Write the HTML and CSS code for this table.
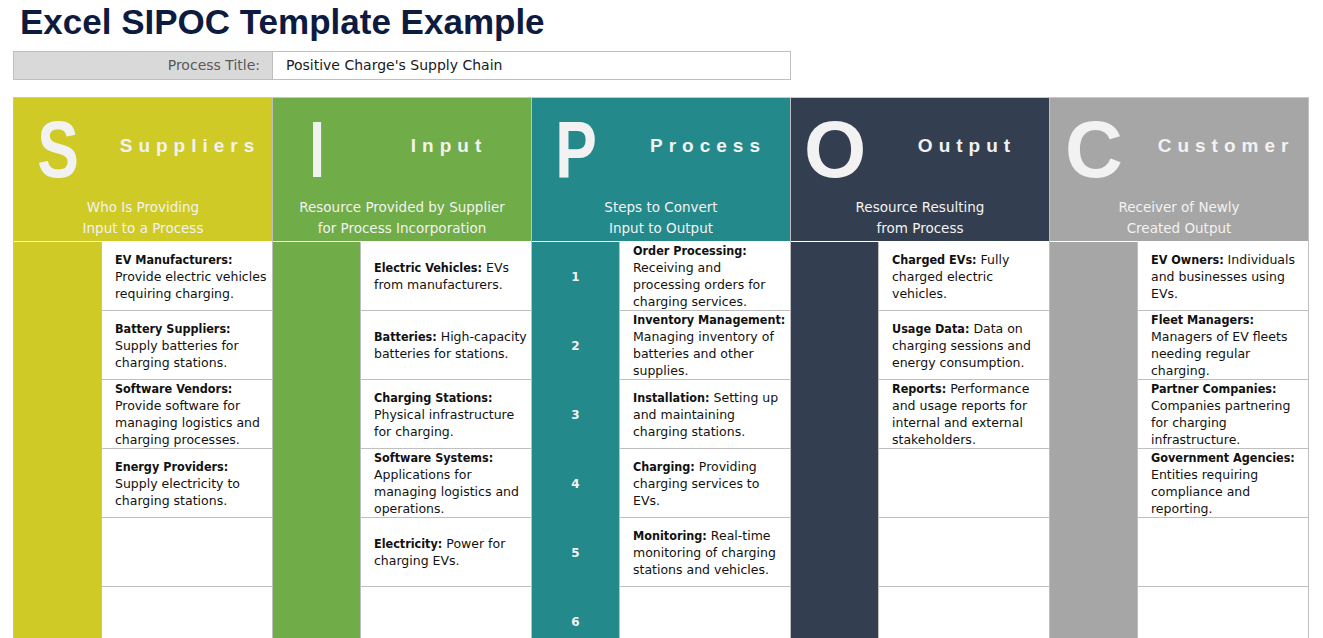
FILE: index.html
```html
<!DOCTYPE html>
<html lang="en">
<head>
<meta charset="utf-8">
<title>Excel SIPOC Template Example</title>
<link rel="stylesheet" href="styles.css">
</head>
<body>
<div class="page">
  <h1 class="title">Excel SIPOC Template Example</h1>
  <div class="ptitle">
    <div class="ptitle-label">Process Title:</div>
    <div class="ptitle-value">Positive Charge's Supply Chain</div>
  </div>

  <div class="sipoc">
    <!-- Suppliers -->
    <div class="col col-s">
      <div class="hd">
        <div class="hd-top">
          <div class="hd-letter">S</div>
          <div class="hd-name">Suppliers</div>
        </div>
        <div class="hd-sub">Who Is Providing<br>Input to a Process</div>
      </div>
      <div class="rows">
        <div class="row"><div class="strip"></div><div class="cell"><p><b>EV Manufacturers:</b><br>Provide electric vehicles<br>requiring charging.</p></div></div>
        <div class="row"><div class="strip"></div><div class="cell"><p><b>Battery Suppliers:</b><br>Supply batteries for<br>charging stations.</p></div></div>
        <div class="row"><div class="strip"></div><div class="cell"><p><b>Software Vendors:</b><br>Provide software for<br>managing logistics and<br>charging processes.</p></div></div>
        <div class="row"><div class="strip"></div><div class="cell"><p><b>Energy Providers:</b><br>Supply electricity to<br>charging stations.</p></div></div>
        <div class="row"><div class="strip"></div><div class="cell"></div></div>
        <div class="row"><div class="strip"></div><div class="cell"></div></div>
      </div>
    </div>

    <!-- Input -->
    <div class="col col-i">
      <div class="hd">
        <div class="hd-top">
          <div class="hd-letter">I</div>
          <div class="hd-name">Input</div>
        </div>
        <div class="hd-sub">Resource Provided by Supplier<br>for Process Incorporation</div>
      </div>
      <div class="rows">
        <div class="row"><div class="strip"></div><div class="cell"><p><b>Electric Vehicles:</b> EVs<br>from manufacturers.</p></div></div>
        <div class="row"><div class="strip"></div><div class="cell"><p><b>Batteries:</b> High-capacity<br>batteries for stations.</p></div></div>
        <div class="row"><div class="strip"></div><div class="cell"><p><b>Charging Stations:</b><br>Physical infrastructure<br>for charging.</p></div></div>
        <div class="row"><div class="strip"></div><div class="cell"><p><b>Software Systems:</b><br>Applications for<br>managing logistics and<br>operations.</p></div></div>
        <div class="row"><div class="strip"></div><div class="cell"><p><b>Electricity:</b> Power for<br>charging EVs.</p></div></div>
        <div class="row"><div class="strip"></div><div class="cell"></div></div>
      </div>
    </div>

    <!-- Process -->
    <div class="col col-p">
      <div class="hd">
        <div class="hd-top">
          <div class="hd-letter">P</div>
          <div class="hd-name">Process</div>
        </div>
        <div class="hd-sub">Steps to Convert<br>Input to Output</div>
      </div>
      <div class="rows">
        <div class="row"><div class="strip">1</div><div class="cell"><p><b>Order Processing:</b><br>Receiving and<br>processing orders for<br>charging services.</p></div></div>
        <div class="row"><div class="strip">2</div><div class="cell"><p><b>Inventory Management:</b><br>Managing inventory of<br>batteries and other<br>supplies.</p></div></div>
        <div class="row"><div class="strip">3</div><div class="cell"><p><b>Installation:</b> Setting up<br>and maintaining<br>charging stations.</p></div></div>
        <div class="row"><div class="strip">4</div><div class="cell"><p><b>Charging:</b> Providing<br>charging services to<br>EVs.</p></div></div>
        <div class="row"><div class="strip">5</div><div class="cell"><p><b>Monitoring:</b> Real-time<br>monitoring of charging<br>stations and vehicles.</p></div></div>
        <div class="row"><div class="strip">6</div><div class="cell"></div></div>
      </div>
    </div>

    <!-- Output -->
    <div class="col col-o">
      <div class="hd">
        <div class="hd-top">
          <div class="hd-letter">O</div>
          <div class="hd-name">Output</div>
        </div>
        <div class="hd-sub">Resource Resulting<br>from Process</div>
      </div>
      <div class="rows">
        <div class="row"><div class="strip"></div><div class="cell"><p><b>Charged EVs:</b> Fully<br>charged electric<br>vehicles.</p></div></div>
        <div class="row"><div class="strip"></div><div class="cell"><p><b>Usage Data:</b> Data on<br>charging sessions and<br>energy consumption.</p></div></div>
        <div class="row"><div class="strip"></div><div class="cell"><p><b>Reports:</b> Performance<br>and usage reports for<br>internal and external<br>stakeholders.</p></div></div>
        <div class="row"><div class="strip"></div><div class="cell"></div></div>
        <div class="row"><div class="strip"></div><div class="cell"></div></div>
        <div class="row"><div class="strip"></div><div class="cell"></div></div>
      </div>
    </div>

    <!-- Customer -->
    <div class="col col-c">
      <div class="hd">
        <div class="hd-top">
          <div class="hd-letter">C</div>
          <div class="hd-name">Customer</div>
        </div>
        <div class="hd-sub">Receiver of Newly<br>Created Output</div>
      </div>
      <div class="rows">
        <div class="row"><div class="strip"></div><div class="cell"><p><b>EV Owners:</b> Individuals<br>and businesses using<br>EVs.</p></div></div>
        <div class="row"><div class="strip"></div><div class="cell"><p><b>Fleet Managers:</b><br>Managers of EV fleets<br>needing regular<br>charging.</p></div></div>
        <div class="row"><div class="strip"></div><div class="cell"><p><b>Partner Companies:</b><br>Companies partnering<br>for charging<br>infrastructure.</p></div></div>
        <div class="row"><div class="strip"></div><div class="cell"><p><b>Government Agencies:</b><br>Entities requiring<br>compliance and<br>reporting.</p></div></div>
        <div class="row"><div class="strip"></div><div class="cell"></div></div>
        <div class="row"><div class="strip"></div><div class="cell"></div></div>
      </div>
    </div>
  </div>
</div>
</body>
</html>
```

FILE: styles.css
```css
html { overflow: hidden; }
body {
  margin: 0;
  background: #ffffff;
  font-family: "DejaVu Sans", "Liberation Sans", sans-serif;
  color: #111111;
}
.page {
  padding-left: 13px;
}
.title {
  margin: 0;
  padding-left: 7px;
  height: 51px;
  font-family: "Liberation Sans", Arial, sans-serif;
  font-weight: 700;
  font-size: 35px;
  line-height: 44px;
  color: #0e1b40;
}
.ptitle {
  display: flex;
  width: 776px;
  height: 27px;
  border: 1px solid #bfbfbf;
  font-size: 14px;
}
.ptitle-label {
  width: 246px;
  padding-right: 12px;
  background: #d9d9d9;
  border-right: 1px solid #bfbfbf;
  color: #595959;
  text-align: right;
  line-height: 27px;
}
.ptitle-value {
  flex: 1;
  padding-left: 13px;
  color: #1a1a1a;
  line-height: 27px;
}
.sipoc {
  margin-top: 17px;
  display: inline-flex;
  border-top: 1px solid #c8c8c8;
}
.col {
  width: 258px;
  border-left: 1px solid #bfbfbf;
}
.col:last-child {
  border-right: 1px solid #bfbfbf;
}
.hd {
  height: 143px;
  color: #f2f2f2;
  display: flex;
  flex-direction: column;
}
.hd-top {
  height: 96px;
  display: flex;
  align-items: center;
}
.hd-letter {
  width: 88px;
  text-align: center;
  font-family: "Liberation Sans", Arial, sans-serif;
  font-weight: 700;
  font-size: 80px;
  line-height: 1;
  margin-top: 8px;
}
.col-s .hd-letter,
.col-p .hd-letter {
  transform: scaleX(0.78);
}
.col-i .hd-letter {
  transform: scaleX(0.7);
}
.hd-name {
  flex: 1;
  text-align: center;
  font-family: "Liberation Sans", Arial, sans-serif;
  font-weight: 700;
  font-size: 19px;
  letter-spacing: 6px;
  padding-left: 6px;
}
.hd-sub {
  margin-top: 3px;
  text-align: center;
  font-size: 13.5px;
  line-height: 21px;
}
.rows {
  margin-top: 1px;
}
.row {
  display: flex;
  height: 69px;
}
.strip {
  width: 87px;
  display: flex;
  align-items: center;
  justify-content: center;
  color: #f2f2f2;
  font-weight: 700;
  font-size: 12px;
}
.cell {
  flex: 1;
  border-left: 1px solid #bfbfbf;
  border-bottom: 1px solid #bfbfbf;
  padding-left: 13px;
  display: flex;
  align-items: center;
  background: #ffffff;
  overflow: hidden;
}
.cell p {
  margin: 0;
  font-size: 12.5px;
  line-height: 17px;
  white-space: nowrap;
  color: #111111;
}
.cell b {
  font-family: "DejaVu Sans Condensed", "DejaVu Sans", sans-serif;
  font-stretch: condensed;
  font-weight: 700;
  font-size: 12.5px;
}
.col-s .hd, .col-s .strip { background: #cfca25; }
.col-i .hd, .col-i .strip { background: #70ac47; }
.col-p .hd, .col-p .strip { background: #24898b; }
.col-o .hd, .col-o .strip { background: #333f50; }
.col-c .hd, .col-c .strip { background: #a6a6a6; }
```
